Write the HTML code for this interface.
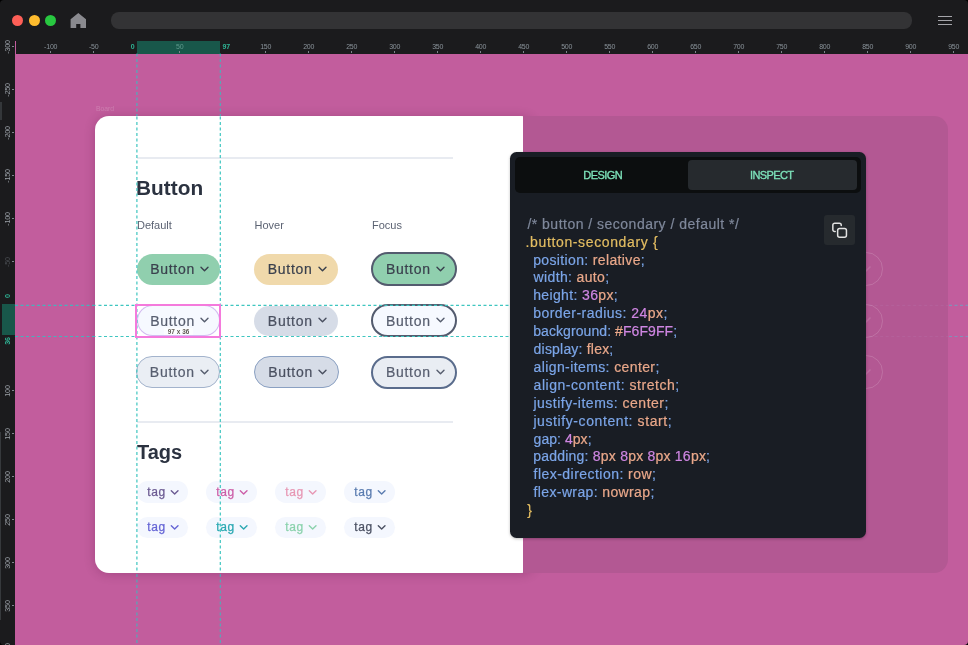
<!DOCTYPE html>
<html><head><meta charset="utf-8"><style>
*{margin:0;padding:0;box-sizing:border-box}
html,body{width:968px;height:645px;overflow:hidden;background:#1b1b1d;font-family:"Liberation Sans",sans-serif}
.a{position:absolute;white-space:pre}
.L{position:absolute;left:0;top:0;width:968px;height:645px;will-change:transform}
.tl{position:absolute;top:15px;width:11px;height:11px;border-radius:50%}
.rl{position:absolute;font-size:7px;line-height:8px;color:#8a939a;top:42.5px;white-space:nowrap;letter-spacing:-0.2px}
.tk{position:absolute;top:50.5px;width:1px;height:2px;background:#7f858d}
.vl{position:absolute;font-size:7.2px;line-height:8px;color:#9ba0a7;white-space:nowrap;letter-spacing:-0.2px}
.vtk{position:absolute;left:12px;width:2px;height:1px;background:#7f858d}
.bt{position:absolute;border-radius:20px}

.tg{position:absolute;border-radius:10.7px;background:#f4f7fe}
.tx{position:absolute;font-size:12px;line-height:14px;letter-spacing:0.6px}
.code{position:absolute;font-size:14px;white-space:pre;line-height:17.9px;-webkit-text-stroke:0.2px}
.p{color:#7ba5e8}.v{color:#eaa88a}.n{color:#cf86e2}.s{color:#e3bd62}.c{color:#7f889b}
</style></head><body>
<div class="tl" style="left:12.2px;background:#fe5f57"></div>
<div class="tl" style="left:29px;background:#febc2e"></div>
<div class="tl" style="left:45.4px;background:#28c840"></div>
<svg class="a" style="left:70px;top:12px" width="17" height="17" viewBox="0 0 17 17"><path d="M8.3 0.9 L16 7.3 V16.1 H10.4 V12 H6.2 V16.1 H0.6 V7.3 Z" fill="#8a8a8f"/></svg>
<div class="a" style="left:111px;top:12.3px;width:800.5px;height:16.5px;border-radius:8px;background:#333335"></div>
<div class="a" style="left:938px;top:15.9px;width:13.7px;height:1.3px;background:#a5a5aa"></div>
<div class="a" style="left:938px;top:19.9px;width:13.7px;height:1.3px;background:#a5a5aa"></div>
<div class="a" style="left:938px;top:24.1px;width:13.7px;height:1.3px;background:#a5a5aa"></div>
<div class="a" style="left:15px;top:53.5px;width:953px;height:592px;background:#c25d9d"></div>
<div class="a" style="left:15px;top:41px;width:1px;height:12.5px;background:#c25d9d"></div>
<div class="a" style="left:136.5px;top:41px;width:83.5px;height:12.5px;background:#18574a"></div>
<div class="tk" style="left:50.2px"></div>
<div class="tk" style="left:93.2px"></div>
<div class="tk" style="left:179.2px"></div>
<div class="tk" style="left:265.2px"></div>
<div class="tk" style="left:308.2px"></div>
<div class="tk" style="left:351.2px"></div>
<div class="tk" style="left:394.2px"></div>
<div class="tk" style="left:437.2px"></div>
<div class="tk" style="left:480.2px"></div>
<div class="tk" style="left:523.2px"></div>
<div class="tk" style="left:566.2px"></div>
<div class="tk" style="left:609.2px"></div>
<div class="tk" style="left:652.2px"></div>
<div class="tk" style="left:695.2px"></div>
<div class="tk" style="left:738.2px"></div>
<div class="tk" style="left:781.2px"></div>
<div class="tk" style="left:824.2px"></div>
<div class="tk" style="left:867.2px"></div>
<div class="tk" style="left:910.2px"></div>
<div class="tk" style="left:953.2px"></div>
<div class="L"><div class="rl" style="left:50.7px;width:30px;margin-left:-15px;text-align:center;color:#8a939a">-100</div><div class="rl" style="left:93.7px;width:30px;margin-left:-15px;text-align:center;color:#8a939a">-50</div><div class="rl" style="left:179.7px;width:30px;margin-left:-15px;text-align:center;color:#5f9a8e">50</div><div class="rl" style="left:265.7px;width:30px;margin-left:-15px;text-align:center;color:#8a939a">150</div><div class="rl" style="left:308.7px;width:30px;margin-left:-15px;text-align:center;color:#8a939a">200</div><div class="rl" style="left:351.7px;width:30px;margin-left:-15px;text-align:center;color:#8a939a">250</div><div class="rl" style="left:394.7px;width:30px;margin-left:-15px;text-align:center;color:#8a939a">300</div><div class="rl" style="left:437.7px;width:30px;margin-left:-15px;text-align:center;color:#8a939a">350</div><div class="rl" style="left:480.7px;width:30px;margin-left:-15px;text-align:center;color:#8a939a">400</div><div class="rl" style="left:523.7px;width:30px;margin-left:-15px;text-align:center;color:#8a939a">450</div><div class="rl" style="left:566.7px;width:30px;margin-left:-15px;text-align:center;color:#8a939a">500</div><div class="rl" style="left:609.7px;width:30px;margin-left:-15px;text-align:center;color:#8a939a">550</div><div class="rl" style="left:652.7px;width:30px;margin-left:-15px;text-align:center;color:#8a939a">600</div><div class="rl" style="left:695.7px;width:30px;margin-left:-15px;text-align:center;color:#8a939a">650</div><div class="rl" style="left:738.7px;width:30px;margin-left:-15px;text-align:center;color:#8a939a">700</div><div class="rl" style="left:781.7px;width:30px;margin-left:-15px;text-align:center;color:#8a939a">750</div><div class="rl" style="left:824.7px;width:30px;margin-left:-15px;text-align:center;color:#8a939a">800</div><div class="rl" style="left:867.7px;width:30px;margin-left:-15px;text-align:center;color:#8a939a">850</div><div class="rl" style="left:910.7px;width:30px;margin-left:-15px;text-align:center;color:#8a939a">900</div><div class="rl" style="left:953.7px;width:30px;margin-left:-15px;text-align:center;color:#8a939a">950</div><div class="rl" style="left:117.6px;width:30px;text-align:center;color:#2fb596;font-weight:bold">0</div><div class="rl" style="left:211.2px;width:30px;text-align:center;color:#2fb596;font-weight:bold">97</div></div>
<div class="a" style="left:2px;top:304.2px;width:12.8px;height:30.8px;background:#18574a"></div>
<div class="a" style="left:0;top:102px;width:2px;height:18px;background:#34373a"></div>
<div class="a" style="left:0;top:432px;width:1.2px;height:188px;background:#36393c"></div>
<div class="a" style="left:0;top:40px;width:15px;height:605px;overflow:hidden;will-change:transform"><div class="vl" style="left:-7.4px;top:2.5px;width:30px;text-align:center;transform:rotate(-90deg)">-300</div><div class="vtk" style="top:6.0px"></div><div class="vl" style="left:-7.4px;top:45.5px;width:30px;text-align:center;transform:rotate(-90deg)">-250</div><div class="vtk" style="top:49.0px"></div><div class="vl" style="left:-7.4px;top:88.5px;width:30px;text-align:center;transform:rotate(-90deg)">-200</div><div class="vtk" style="top:92.0px"></div><div class="vl" style="left:-7.4px;top:131.5px;width:30px;text-align:center;transform:rotate(-90deg)">-150</div><div class="vtk" style="top:135.0px"></div><div class="vl" style="left:-7.4px;top:174.5px;width:30px;text-align:center;transform:rotate(-90deg)">-100</div><div class="vtk" style="top:178.0px"></div><div class="vl" style="left:-7.4px;top:217.5px;width:30px;text-align:center;transform:rotate(-90deg);color:#4a4d52">-50</div><div class="vtk" style="top:221.0px"></div><div class="vl" style="left:-7.4px;top:346.5px;width:30px;text-align:center;transform:rotate(-90deg)">100</div><div class="vtk" style="top:350.0px"></div><div class="vl" style="left:-7.4px;top:389.5px;width:30px;text-align:center;transform:rotate(-90deg)">150</div><div class="vtk" style="top:393.0px"></div><div class="vl" style="left:-7.4px;top:432.5px;width:30px;text-align:center;transform:rotate(-90deg)">200</div><div class="vtk" style="top:436.0px"></div><div class="vl" style="left:-7.4px;top:475.5px;width:30px;text-align:center;transform:rotate(-90deg)">250</div><div class="vtk" style="top:479.0px"></div><div class="vl" style="left:-7.4px;top:518.5px;width:30px;text-align:center;transform:rotate(-90deg)">300</div><div class="vtk" style="top:522.0px"></div><div class="vl" style="left:-7.4px;top:561.5px;width:30px;text-align:center;transform:rotate(-90deg)">350</div><div class="vtk" style="top:565.0px"></div><div class="vl" style="left:-7.4px;top:604.5px;width:30px;text-align:center;transform:rotate(-90deg)">400</div><div class="vtk" style="top:608.0px"></div><div class="vl" style="left:-7.4px;top:252.0px;width:30px;text-align:center;transform:rotate(-90deg);color:#2fb596;font-weight:bold">0</div><div class="vl" style="left:-7.4px;top:297.0px;width:30px;text-align:center;transform:rotate(-90deg);color:#2fb596;font-weight:bold">36</div></div>
<div class="a L" style="left:96px;top:104.5px;width:30px;height:10px;font-size:6.8px;line-height:8px;color:rgba(255,255,255,0.2)">Board</div>
<div class="a" style="left:95.3px;top:116px;width:440px;height:457px;background:#fff;border-radius:14px;box-shadow:0 1px 11px rgba(70,10,50,0.24)"></div>
<div class="a" style="left:137px;top:157.3px;width:316px;height:1.3px;background:#e8ebf1"></div>
<div class="bt" style="left:137.00px;top:253.50px;width:82.90px;height:31.00px;background:#90cfae;"></div>
<svg class="a" style="left:199.95px;top:265.50px" width="10" height="7" viewBox="0 0 10 7"><path d="M1 1.2 L4.5 4.8 L8 1.2" fill="none" stroke="#3a404d" stroke-width="1.4" stroke-linecap="round" stroke-linejoin="round"/></svg>
<div class="bt" style="left:254.30px;top:253.60px;width:83.50px;height:31.00px;background:#f0d9ab;"></div>
<svg class="a" style="left:317.55px;top:265.60px" width="10" height="7" viewBox="0 0 10 7"><path d="M1 1.2 L4.5 4.8 L8 1.2" fill="none" stroke="#3a404d" stroke-width="1.4" stroke-linecap="round" stroke-linejoin="round"/></svg>
<div class="bt" style="left:371.20px;top:252.40px;width:86.00px;height:33.80px;background:#90cfae;border:2px solid #535b6e;"></div>
<svg class="a" style="left:435.70px;top:265.80px" width="10" height="7" viewBox="0 0 10 7"><path d="M1 1.2 L4.5 4.8 L8 1.2" fill="none" stroke="#3a404d" stroke-width="1.4" stroke-linecap="round" stroke-linejoin="round"/></svg>
<div class="bt" style="left:137.00px;top:305.00px;width:83.00px;height:31.00px;background:#f6f9ff;border:1px solid rgba(175,125,225,0.5);"></div>
<svg class="a" style="left:200.00px;top:317.35px" width="10" height="7" viewBox="0 0 10 7"><path d="M1 1.2 L4.5 4.8 L8 1.2" fill="none" stroke="#575e6f" stroke-width="1.4" stroke-linecap="round" stroke-linejoin="round"/></svg>
<div class="bt" style="left:254.30px;top:306.00px;width:83.70px;height:29.70px;background:#d6dce7;"></div>
<svg class="a" style="left:317.65px;top:317.35px" width="10" height="7" viewBox="0 0 10 7"><path d="M1 1.2 L4.5 4.8 L8 1.2" fill="none" stroke="#4a5060" stroke-width="1.4" stroke-linecap="round" stroke-linejoin="round"/></svg>
<div class="bt" style="left:371.20px;top:304.30px;width:86.00px;height:33.00px;background:#f6f9ff;border:2px solid #535b6e;"></div>
<svg class="a" style="left:435.70px;top:317.30px" width="10" height="7" viewBox="0 0 10 7"><path d="M1 1.2 L4.5 4.8 L8 1.2" fill="none" stroke="#575e6f" stroke-width="1.4" stroke-linecap="round" stroke-linejoin="round"/></svg>
<div class="bt" style="left:136.20px;top:356.00px;width:83.90px;height:32.40px;background:#eaeef4;border:1px solid #a3b3cc;"></div>
<svg class="a" style="left:199.65px;top:368.70px" width="10" height="7" viewBox="0 0 10 7"><path d="M1 1.2 L4.5 4.8 L8 1.2" fill="none" stroke="#575e6f" stroke-width="1.4" stroke-linecap="round" stroke-linejoin="round"/></svg>
<div class="bt" style="left:254.00px;top:356.20px;width:85.00px;height:31.80px;background:#d6dce7;border:1px solid #8aa0c2;"></div>
<svg class="a" style="left:318.00px;top:368.60px" width="10" height="7" viewBox="0 0 10 7"><path d="M1 1.2 L4.5 4.8 L8 1.2" fill="none" stroke="#4a5060" stroke-width="1.4" stroke-linecap="round" stroke-linejoin="round"/></svg>
<div class="bt" style="left:371.20px;top:356.00px;width:86.00px;height:33.20px;background:#e9edf3;border:2px solid #5a6c8c;"></div>
<svg class="a" style="left:435.70px;top:369.10px" width="10" height="7" viewBox="0 0 10 7"><path d="M1 1.2 L4.5 4.8 L8 1.2" fill="none" stroke="#575e6f" stroke-width="1.4" stroke-linecap="round" stroke-linejoin="round"/></svg>
<div class="a" style="left:137px;top:421.3px;width:316px;height:1.3px;background:#e8ebf1"></div>
<div class="tg" style="left:136.80px;top:481.40px;width:51px;height:21.4px"></div>
<svg class="a" style="left:170.00px;top:488.80px" width="10" height="8" viewBox="0 0 10 8"><path d="M1.3 1.7 L4.65 5 L8 1.7" fill="none" stroke="#6b5a92" stroke-width="1.4" stroke-linecap="round" stroke-linejoin="round"/></svg>
<div class="tg" style="left:205.80px;top:481.40px;width:51px;height:21.4px"></div>
<svg class="a" style="left:239.00px;top:488.80px" width="10" height="8" viewBox="0 0 10 8"><path d="M1.3 1.7 L4.65 5 L8 1.7" fill="none" stroke="#cc5fa8" stroke-width="1.4" stroke-linecap="round" stroke-linejoin="round"/></svg>
<div class="tg" style="left:274.80px;top:481.40px;width:51px;height:21.4px"></div>
<svg class="a" style="left:308.00px;top:488.80px" width="10" height="8" viewBox="0 0 10 8"><path d="M1.3 1.7 L4.65 5 L8 1.7" fill="none" stroke="#e797b4" stroke-width="1.4" stroke-linecap="round" stroke-linejoin="round"/></svg>
<div class="tg" style="left:343.80px;top:481.40px;width:51px;height:21.4px"></div>
<svg class="a" style="left:377.00px;top:488.80px" width="10" height="8" viewBox="0 0 10 8"><path d="M1.3 1.7 L4.65 5 L8 1.7" fill="none" stroke="#5a7cb0" stroke-width="1.4" stroke-linecap="round" stroke-linejoin="round"/></svg>
<div class="tg" style="left:136.80px;top:516.60px;width:51px;height:21.4px"></div>
<svg class="a" style="left:170.00px;top:524.00px" width="10" height="8" viewBox="0 0 10 8"><path d="M1.3 1.7 L4.65 5 L8 1.7" fill="none" stroke="#6565d5" stroke-width="1.4" stroke-linecap="round" stroke-linejoin="round"/></svg>
<div class="tg" style="left:205.80px;top:516.60px;width:51px;height:21.4px"></div>
<svg class="a" style="left:239.00px;top:524.00px" width="10" height="8" viewBox="0 0 10 8"><path d="M1.3 1.7 L4.65 5 L8 1.7" fill="none" stroke="#2ba8b2" stroke-width="1.4" stroke-linecap="round" stroke-linejoin="round"/></svg>
<div class="tg" style="left:274.80px;top:516.60px;width:51px;height:21.4px"></div>
<svg class="a" style="left:308.00px;top:524.00px" width="10" height="8" viewBox="0 0 10 8"><path d="M1.3 1.7 L4.65 5 L8 1.7" fill="none" stroke="#8bd2ad" stroke-width="1.4" stroke-linecap="round" stroke-linejoin="round"/></svg>
<div class="tg" style="left:343.80px;top:516.60px;width:51px;height:21.4px"></div>
<svg class="a" style="left:377.00px;top:524.00px" width="10" height="8" viewBox="0 0 10 8"><path d="M1.3 1.7 L4.65 5 L8 1.7" fill="none" stroke="#4b5163" stroke-width="1.4" stroke-linecap="round" stroke-linejoin="round"/></svg>
<div class="L"><div class="a" style="left:136.00px;top:175.89px;font-size:20.8px;line-height:24px;color:#2b3240;font-weight:bold;letter-spacing:0.05px">Button</div><div class="a" style="left:137.00px;top:218.99px;font-size:11px;line-height:13px;color:#5c6373;">Default</div><div class="a" style="left:254.50px;top:218.99px;font-size:11px;line-height:13px;color:#5c6373;">Hover</div><div class="a" style="left:372.00px;top:218.99px;font-size:11px;line-height:13px;color:#5c6373;">Focus</div><div class="a" style="left:150.15px;top:260.85px;font-size:14px;line-height:16px;color:#3a404d;letter-spacing:0.72px;-webkit-text-stroke:0.2px">Button</div><div class="a" style="left:267.75px;top:260.95px;font-size:14px;line-height:16px;color:#3a404d;letter-spacing:0.72px;-webkit-text-stroke:0.2px">Button</div><div class="a" style="left:385.90px;top:261.15px;font-size:14px;line-height:16px;color:#3a404d;letter-spacing:0.72px;-webkit-text-stroke:0.2px">Button</div><div class="a" style="left:150.20px;top:312.70px;font-size:14px;line-height:16px;color:#575e6f;letter-spacing:0.72px;-webkit-text-stroke:0.2px">Button</div><div class="a" style="left:267.85px;top:312.70px;font-size:14px;line-height:16px;color:#4a5060;letter-spacing:0.72px;-webkit-text-stroke:0.2px">Button</div><div class="a" style="left:385.90px;top:312.65px;font-size:14px;line-height:16px;color:#575e6f;letter-spacing:0.72px;-webkit-text-stroke:0.2px">Button</div><div class="a" style="left:149.85px;top:364.05px;font-size:14px;line-height:16px;color:#575e6f;letter-spacing:0.72px;-webkit-text-stroke:0.2px">Button</div><div class="a" style="left:268.20px;top:363.95px;font-size:14px;line-height:16px;color:#4a5060;letter-spacing:0.72px;-webkit-text-stroke:0.2px">Button</div><div class="a" style="left:385.90px;top:364.45px;font-size:14px;line-height:16px;color:#575e6f;letter-spacing:0.72px;-webkit-text-stroke:0.2px">Button</div><div class="a" style="left:137.00px;top:439.97px;font-size:20px;line-height:24px;color:#2b3240;font-weight:bold">Tags</div><div class="a" style="left:147.30px;top:484.84px;font-size:12px;line-height:14px;color:#6b5a92;letter-spacing:0.6px;-webkit-text-stroke:0.25px #6b5a92">tag</div><div class="a" style="left:216.30px;top:484.84px;font-size:12px;line-height:14px;color:#cc5fa8;letter-spacing:0.6px;-webkit-text-stroke:0.25px #cc5fa8">tag</div><div class="a" style="left:285.30px;top:484.84px;font-size:12px;line-height:14px;color:#e797b4;letter-spacing:0.6px;-webkit-text-stroke:0.25px #e797b4">tag</div><div class="a" style="left:354.30px;top:484.84px;font-size:12px;line-height:14px;color:#5a7cb0;letter-spacing:0.6px;-webkit-text-stroke:0.25px #5a7cb0">tag</div><div class="a" style="left:147.30px;top:520.04px;font-size:12px;line-height:14px;color:#6565d5;letter-spacing:0.6px;-webkit-text-stroke:0.25px #6565d5">tag</div><div class="a" style="left:216.30px;top:520.04px;font-size:12px;line-height:14px;color:#2ba8b2;letter-spacing:0.6px;-webkit-text-stroke:0.25px #2ba8b2">tag</div><div class="a" style="left:285.30px;top:520.04px;font-size:12px;line-height:14px;color:#8bd2ad;letter-spacing:0.6px;-webkit-text-stroke:0.25px #8bd2ad">tag</div><div class="a" style="left:354.30px;top:520.04px;font-size:12px;line-height:14px;color:#4b5163;letter-spacing:0.6px;-webkit-text-stroke:0.25px #4b5163">tag</div></div>
<div class="a" style="left:522.7px;top:116px;width:425.3px;height:457px;background:#b35893;border-radius:0 14px 14px 0"></div>
<div class="a" style="left:849.3px;top:252.35px;width:33.7px;height:33.7px;border-radius:50%;border:1.6px solid rgba(255,255,255,0.15)"></div>
<svg class="a" style="left:858px;top:262.70px" width="16" height="12" viewBox="0 0 16 12"><path d="M3 7 L6 10 L12.5 3.5" fill="none" stroke="rgba(255,255,255,0.13)" stroke-width="1.5"/></svg>
<div class="a" style="left:849.3px;top:303.85px;width:33.7px;height:33.7px;border-radius:50%;border:1.6px solid rgba(255,255,255,0.15)"></div>
<svg class="a" style="left:858px;top:314.20px" width="16" height="12" viewBox="0 0 16 12"><path d="M3 7 L6 10 L12.5 3.5" fill="none" stroke="rgba(255,255,255,0.13)" stroke-width="1.5"/></svg>
<div class="a" style="left:849.3px;top:355.25px;width:33.7px;height:33.7px;border-radius:50%;border:1.6px solid rgba(255,255,255,0.15)"></div>
<svg class="a" style="left:858px;top:365.60px" width="16" height="12" viewBox="0 0 16 12"><path d="M3 7 L6 10 L12.5 3.5" fill="none" stroke="rgba(255,255,255,0.13)" stroke-width="1.5"/></svg>
<svg class="a" style="left:0;top:0" width="968" height="645"><line x1="136.9" y1="53.5" x2="136.9" y2="116" stroke="rgba(40,200,195,0.75)" stroke-width="1.2" stroke-dasharray="3 2.5"/><line x1="136.9" y1="116" x2="136.9" y2="573" stroke="#3fc6c0" stroke-width="1.2" stroke-dasharray="3 2.5" stroke-dashoffset="-0.5"/><line x1="136.9" y1="573" x2="136.9" y2="645" stroke="rgba(40,200,195,0.7)" stroke-width="1.2" stroke-dasharray="3 2.5" stroke-dashoffset="-1"/><line x1="220.3" y1="53.5" x2="220.3" y2="116" stroke="rgba(40,200,195,0.75)" stroke-width="1.2" stroke-dasharray="3 2.5"/><line x1="220.3" y1="116" x2="220.3" y2="573" stroke="#3fc6c0" stroke-width="1.2" stroke-dasharray="3 2.5" stroke-dashoffset="-0.5"/><line x1="220.3" y1="573" x2="220.3" y2="645" stroke="rgba(40,200,195,0.7)" stroke-width="1.2" stroke-dasharray="3 2.5" stroke-dashoffset="-1"/><line x1="15" y1="305.3" x2="95.5" y2="305.3" stroke="rgba(40,200,195,0.8)" stroke-width="1.2" stroke-dasharray="3 2.5"/><line x1="95.5" y1="305.3" x2="522.7" y2="305.3" stroke="#3fc6c0" stroke-width="1.2" stroke-dasharray="3 2.5" stroke-dashoffset="-3"/><line x1="522.7" y1="305.3" x2="948" y2="305.3" stroke="rgba(190,150,200,0.14)" stroke-width="1.2" stroke-dasharray="3 2.5"/><line x1="948" y1="305.3" x2="968" y2="305.3" stroke="#8290b8" stroke-width="1.2" stroke-dasharray="3 2.5" stroke-dashoffset="-1"/><line x1="15" y1="336.5" x2="95.5" y2="336.5" stroke="rgba(40,200,195,0.8)" stroke-width="1.2" stroke-dasharray="3 2.5"/><line x1="95.5" y1="336.5" x2="522.7" y2="336.5" stroke="#3fc6c0" stroke-width="1.2" stroke-dasharray="3 2.5" stroke-dashoffset="-3"/><line x1="522.7" y1="336.5" x2="948" y2="336.5" stroke="rgba(190,150,200,0.14)" stroke-width="1.2" stroke-dasharray="3 2.5"/><line x1="948" y1="336.5" x2="968" y2="336.5" stroke="#8290b8" stroke-width="1.2" stroke-dasharray="3 2.5" stroke-dashoffset="-1"/></svg>
<div class="a" style="left:135.4px;top:304.1px;width:85.8px;height:33.8px;border:2px solid #f47adc"></div>
<div class="a" style="left:164.3px;top:327.7px;width:29px;height:7.7px;background:rgba(255,255,255,0.6)"></div>
<div class="L"><div class="a" style="left:167.70px;top:328.48px;font-size:6.4px;line-height:7px;color:#5e5852;letter-spacing:0.05px;font-weight:bold">97 x 36</div></div>
<div class="a" style="left:510px;top:151.7px;width:355.5px;height:386.5px;background:#191d24;border-radius:6.5px;box-shadow:0 1px 3px rgba(0,0,0,0.25)"></div>
<div class="a" style="left:515px;top:157px;width:345.5px;height:35.5px;background:#0c0e0f;border-radius:5px"></div>
<div class="a" style="left:687.7px;top:160px;width:169.6px;height:30px;background:#262a2e;border-radius:4px"></div>
<div class="a" style="left:824px;top:215px;width:31px;height:30px;background:#262a2e;border-radius:3px"></div>
<svg class="a" style="left:830px;top:220px" width="20" height="20" viewBox="0 0 20 20"><path d="M5.2 11.55 H4.75 A1.9 1.9 0 0 1 2.85 9.65 V5.05 A1.9 1.9 0 0 1 4.75 3.15 H9.35 A1.9 1.9 0 0 1 11.25 5.05 V5.5" fill="none" stroke="#e2e2e2" stroke-width="1.5" stroke-linecap="round"/><rect x="7.65" y="8.45" width="8.8" height="8.7" rx="2" fill="none" stroke="#e2e2e2" stroke-width="1.5"/></svg>
<div class="L"><div class="a" style="left:583.30px;top:168.59px;font-size:11px;line-height:13px;color:#7de2ba;letter-spacing:-0.55px;-webkit-text-stroke:0.35px">DESIGN</div><div class="a" style="left:750.00px;top:168.69px;font-size:11px;line-height:13px;color:#7de2ba;letter-spacing:-0.6px;-webkit-text-stroke:0.35px">INSPECT</div><div class="code" style="left:527.4px;top:215.70px;letter-spacing:0.49px"><span class="c">/* button / secondary / default */</span></div><div class="code" style="left:525.6px;top:233.60px;letter-spacing:0.63px"><span class="s">.button-secondary {</span></div><div class="code" style="left:533.2px;top:251.50px;letter-spacing:0.36px"><span class="p">position: </span><span class="v">relative</span><span class="p">;</span></div><div class="code" style="left:533.6px;top:269.40px;letter-spacing:0.35px"><span class="p">width: </span><span class="v">auto</span><span class="p">;</span></div><div class="code" style="left:533.2px;top:287.30px;letter-spacing:0.36px"><span class="p">height: </span><span class="n">36</span><span class="v">px</span><span class="p">;</span></div><div class="code" style="left:533.2px;top:305.20px;letter-spacing:0.47px"><span class="p">border-radius: </span><span class="n">24</span><span class="v">px</span><span class="p">;</span></div><div class="code" style="left:533.2px;top:323.10px;letter-spacing:0.08px"><span class="p">background: </span><span class="v">#</span><span class="n">F6F9FF</span><span class="p">;</span></div><div class="code" style="left:533.6px;top:341.00px;letter-spacing:0.20px"><span class="p">display: </span><span class="v">flex</span><span class="p">;</span></div><div class="code" style="left:533.6px;top:358.90px;letter-spacing:0.39px"><span class="p">align-items: </span><span class="v">center</span><span class="p">;</span></div><div class="code" style="left:533.6px;top:376.80px;letter-spacing:0.53px"><span class="p">align-content: </span><span class="v">stretch</span><span class="p">;</span></div><div class="code" style="left:533.4px;top:394.70px;letter-spacing:0.50px"><span class="p">justify-items: </span><span class="v">center</span><span class="p">;</span></div><div class="code" style="left:533.4px;top:412.60px;letter-spacing:0.59px"><span class="p">justify-content: </span><span class="v">start</span><span class="p">;</span></div><div class="code" style="left:533.6px;top:430.50px;letter-spacing:0.04px"><span class="p">gap: </span><span class="n">4</span><span class="v">px</span><span class="p">;</span></div><div class="code" style="left:533.2px;top:448.40px;letter-spacing:0.22px"><span class="p">padding: </span><span class="n">8</span><span class="v">px </span><span class="n">8</span><span class="v">px </span><span class="n">8</span><span class="v">px </span><span class="n">16</span><span class="v">px</span><span class="p">;</span></div><div class="code" style="left:533.6px;top:466.30px;letter-spacing:0.46px"><span class="p">flex-direction: </span><span class="v">row</span><span class="p">;</span></div><div class="code" style="left:533.6px;top:484.20px;letter-spacing:0.37px"><span class="p">flex-wrap: </span><span class="v">nowrap</span><span class="p">;</span></div><div class="code" style="left:527.2px;top:502.10px;letter-spacing:0.00px"><span class="s">}</span></div></div>
<div class="a" style="left:0;top:0;width:968px;height:645px;border-radius:4px;box-shadow:0 0 0 6px #000;pointer-events:none"></div>
</body></html>
